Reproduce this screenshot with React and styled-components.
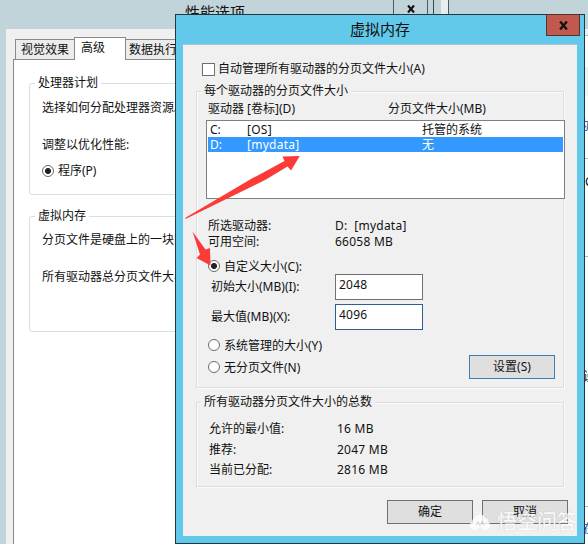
import React from "react";

import styled, { createGlobalStyle } from "styled-components";

const GlobalStyle = createGlobalStyle`
  * {
    box-sizing: border-box;
  }
  body {
    margin: 0;
    overflow: hidden;
    font-family: "Noto Sans", "Noto Sans CJK SC", sans-serif;
    font-size: 12px;
    color: #111;
  }
`;

const drives = [
  { letter: "C:", label: "[OS]", size: "托管的系统" },
  { letter: "D:", label: "[mydata]", size: "无", selected: true },
];

const totals = [
  { name: "允许的最小值:", value: "16 MB", height: 21 },
  { name: "推荐:", value: "2047 MB", height: 20 },
  { name: "当前已分配:", value: "2816 MB", height: 20 },
];

function CloseMark({ size = 8 }) {
  return (
    <svg width={size} height={size} viewBox="0 0 8 8">
      <path d="M1 0.5L7 7.5M7 0.5L1 7.5" stroke="#111" strokeWidth="2.1" />
    </svg>
  );
}

function PerformanceOptions() {
  return (
    <BackWindow>
      <BackTitle>
        <span>性能选项</span>
        <BackClose>
          <CloseMark />
        </BackClose>
      </BackTitle>
      <BackBody>
        <Tabs>
          <Tab $width={59}>视觉效果</Tab>
          <Tab $width={52} $active>
            高级
          </Tab>
          <Tab $width={80}>数据执行保护</Tab>
        </Tabs>
        <TabPage>
          <PageGroup $height={120}>
            <PageLegend>处理器计划</PageLegend>
            <PageText $top={9}>选择如何分配处理器资源。</PageText>
            <PageText $top={21}>调整以优化性能:</PageText>
            <PageText $top={10}>
              <Radio $checked />
              程序(P)
            </PageText>
          </PageGroup>
          <PageGroup $height={124}>
            <PageLegend>虚拟内存</PageLegend>
            <PageText $top={8}>分页文件是硬盘上的一块区域</PageText>
            <PageText $top={21}>所有驱动器总分页文件大小</PageText>
          </PageGroup>
        </TabPage>
      </BackBody>
    </BackWindow>
  );
}

function SystemProperties() {
  return (
    <SideWindow>
      <SideTitle />
      <SideBar $height={6} />
      <SideBar $height={24} $white $line />
      <SideBar $height={8} $white />
      <SideBar $height={29} />
      <SideBar $height={62} $white>
        <SideText $blue $top={22} $left={128}>
          的
        </SideText>
      </SideBar>
      <SideBar $height={98} $white $line>
        <SideText $top={15} $left={136}>
          C:
        </SideText>
      </SideBar>
      <SideBar $height={250} $white $line>
        <SideText $top={112} $left={134}>
          设
        </SideText>
      </SideBar>
      <SideBar $height={51} $white $line>
        <SideText $blue $top={14} $left={134}>
          在
        </SideText>
      </SideBar>
    </SideWindow>
  );
}

function VirtualMemoryDialog() {
  return (
    <Dialog>
      <DialogTitle>
        虚拟内存
        <DialogClose>
          <CloseMark size={9} />
        </DialogClose>
      </DialogTitle>
      <DialogBody>
        <AutoRow>
          <Checkbox />
          自动管理所有驱动器的分页文件大小(A)
        </AutoRow>

        <Group $height={305}>
          <Legend>每个驱动器的分页文件大小</Legend>
          <ListHead>
            <HeadCell>驱动器 [卷标](D)</HeadCell>
            <HeadCell>分页文件大小(MB)</HeadCell>
          </ListHead>
          <DriveList>
            {drives.map((drive) => (
              <DriveRow key={drive.letter} $selected={drive.selected}>
                <span>{drive.letter}</span>
                <Value>{drive.label}</Value>
                <span>{drive.size}</span>
              </DriveRow>
            ))}
          </DriveList>
          <DriveInfo>
            <InfoRow>
              <span>所选驱动器:</span>
              <Value>D:&nbsp; [mydata]</Value>
            </InfoRow>
            <InfoRow>
              <span>可用空间:</span>
              <Value>66058 MB</Value>
            </InfoRow>
          </DriveInfo>
          <RadioRow>
            <Radio $checked />
            自定义大小(C):
          </RadioRow>
          <FieldRow>
            <span>初始大小(MB)(I):</span>
            <Input defaultValue="2048" />
          </FieldRow>
          <FieldRow>
            <span>最大值(MB)(X):</span>
            <Input defaultValue="4096" $focused />
          </FieldRow>
          <SetRow>
            <div>
              <RadioRow $height={22}>
                <Radio />
                系统管理的大小(Y)
              </RadioRow>
              <RadioRow $height={22}>
                <Radio />
                无分页文件(N)
              </RadioRow>
            </div>
            <SetButton>设置(S)</SetButton>
          </SetRow>
        </Group>

        <Group $height={93} $top={6}>
          <Legend>所有驱动器分页文件大小的总数</Legend>
          <TotalList>
            {totals.map((total) => (
              <TotalRow key={total.name} $height={total.height}>
                <span>{total.name}</span>
                <Value>{total.value}</Value>
              </TotalRow>
            ))}
          </TotalList>
        </Group>

        <Footer>
          <Button>确定</Button>
          <Button>取消</Button>
        </Footer>
      </DialogBody>
    </Dialog>
  );
}

function Arrows() {
  return (
    <ArrowLayer width="130" height="120" viewBox="180 150 130 120">
      <path
        d="M185 218L251 179L284.5 161L282.5 156.5L299.8 156L291 170.5L287.5 166.5L266 179.5L186 218.8Z"
        fill="#fb3b38"
      />
      <path
        d="M192.5 231.5L205.5 249.5L210 248L210.5 265.5L196.5 258L200 254.5Z"
        fill="#fb3b38"
      />
    </ArrowLayer>
  );
}

function Watermark() {
  return (
    <Mark>
      <svg width="24" height="19" viewBox="0 0 24 19">
        <path
          d="M6 17C1 17 0 11 4 9C4 6 6 5 7 5C8 1 15 0 17 5C20 5 21 8 20 9C24 11 23 17 18 17C15 17 14 15 12 14C10 15 9 17 6 17Z"
          fill="#fff"
        />
        <path
          d="M8 12L10 9L12 12L14 9L16 12"
          fill="none"
          stroke="#d5d5d5"
          strokeWidth="1.3"
        />
      </svg>
      悟空问答
    </Mark>
  );
}

function App() {
  return (
    <Desktop>
      <GlobalStyle />
      <PerformanceOptions />
      <SystemProperties />
      <VirtualMemoryDialog />
      <Arrows />
      <Watermark />
    </Desktop>
  );
}

const Desktop = styled.main`
  position: relative;
  width: 588px;
  height: 544px;
  overflow: hidden;
  background: #c1d4da;
`;

/* windows behind the dialog */
const BackWindow = styled.section`
  position: absolute;
  left: 0;
  top: 0;
  width: 434px;
  height: 544px;
  border-right: 1px solid #3d484c;
`;

const BackTitle = styled.header`
  height: 29px;
  display: flex;
  justify-content: space-between;
  padding-left: 185px;
  padding-right: 5px;
  font-size: 15px;
  line-height: 25px;
`;

const BackClose = styled.div`
  width: 35px;
  height: 20px;
  padding-top: 5px;
  display: flex;
  justify-content: center;
  border: 1px solid #4d5a5f;
  border-top: 0;
`;

const BackBody = styled.div`
  height: 515px;
  margin-left: 6px;
  padding: 8px 0 0 7px;
  background: #f0f0f0;
`;

const Tabs = styled.div`
  height: 22px;
  display: flex;
  align-items: flex-end;
  padding-left: 2px;
`;

const Tab = styled.div`
  width: ${(props) => props.$width}px;
  height: ${(props) => (props.$active ? 23 : 20)}px;
  margin-bottom: ${(props) => (props.$active ? -1 : 0)}px;
  padding-left: ${(props) => (props.$active ? 6 : 5)}px;
  line-height: 20px;
  white-space: nowrap;
  overflow: hidden;
  border: 1px solid #8a8a8a;
  border-bottom: 0;
  border-left-width: ${(props) => (props.$width === 80 ? 0 : 1)}px;
  border-right-width: ${(props) => (props.$width === 59 ? 0 : 1)}px;
  background: ${(props) => (props.$active ? "#fff" : "#ececec")};
  z-index: ${(props) => (props.$active ? 1 : 0)};

  &:last-child {
    padding-left: 3px;
  }
`;

const TabPage = styled.div`
  height: 490px;
  padding: 15px 0 0 15px;
  border: 1px solid #8a8a8a;
  background: #fff;
`;

const PageGroup = styled.fieldset`
  height: ${(props) => props.$height}px;
  margin: 0 0 13px;
  padding: 0 0 0 12px;
  border: 1px solid #dcdfe0;
  border-radius: 3px;
`;

const PageLegend = styled.legend`
  height: 16px;
  margin-left: -7px;
  padding: 0 3px;
  line-height: 16px;
`;

const PageText = styled.div`
  height: 16px;
  margin-top: ${(props) => props.$top}px;
  display: flex;
  align-items: center;
  gap: 4px;
  line-height: 16px;
  white-space: nowrap;
`;

const SideWindow = styled.section`
  position: absolute;
  left: 448px;
  top: 0;
  width: 140px;
  height: 544px;
  border-left: 1px solid #4d5a5f;
  box-shadow: -7px 0 0 #e8eef0;
`;

const SideTitle = styled.div`
  height: 29px;
`;

const SideBar = styled.div`
  height: ${(props) => props.$height}px;
  overflow: hidden;
  background: ${(props) => (props.$white ? "#fff" : "#eff3f3")};
  border-top: ${(props) => (props.$line ? "1px solid #b4b8ba" : "0")};
`;

const SideText = styled.div`
  margin-top: ${(props) => props.$top}px;
  margin-left: ${(props) => props.$left}px;
  line-height: 16px;
  color: ${(props) => (props.$blue ? "#1646a8" : "#111")};
`;

/* the dialog */
const Dialog = styled.section`
  position: absolute;
  left: 175px;
  top: 14px;
  width: 410px;
  height: 530px;
  padding: 0 7px 7px;
  border: 1px solid #24373f;
  background: #63c9ea;
`;

const DialogTitle = styled.header`
  position: relative;
  height: 29px;
  font-size: 15px;
  line-height: 29px;
  text-align: center;
`;

const DialogClose = styled.div`
  position: absolute;
  right: -3px;
  top: -1px;
  width: 34px;
  height: 22px;
  display: flex;
  align-items: center;
  justify-content: center;
  border: 1px solid #56322f;
  background: #c2594e;
`;

const DialogBody = styled.div`
  height: 492px;
  padding: 16px 13px 0 13px;
  border-top: 1px solid #a9c4ce;
  background: #f0f0f0;
`;

const AutoRow = styled.div`
  height: 16px;
  margin-bottom: 6px;
  padding-left: 6px;
  display: flex;
  align-items: center;
  gap: 3px;
  line-height: 16px;
`;

const Checkbox = styled.span`
  width: 13px;
  height: 13px;
  border: 1px solid #6e6e6e;
  background: #fff;
`;

const Radio = styled.span`
  width: 12px;
  height: 12px;
  flex: none;
  border: 1px solid #6a6a6a;
  border-radius: 50%;
  background: ${(props) =>
    props.$checked
      ? "radial-gradient(circle, #222 0 2.6px, #fff 3.4px)"
      : "#fff"};
`;

const Group = styled.fieldset`
  height: ${(props) => props.$height}px;
  min-width: 0;
  margin: ${(props) => props.$top || 0}px 0 0;
  padding: 0;
  border: 1px solid #dcdcdc;
  box-shadow: inset 1px 1px #fbfbfb, 1px 1px #fbfbfb;
`;

const Legend = styled.legend`
  height: 16px;
  margin-left: 4px;
  padding: 0 3px;
  line-height: 16px;
  background: #f0f0f0;
`;

const ListHead = styled.div`
  height: 21px;
  display: grid;
  grid-template-columns: 180px 1fr;
  padding-left: 11px;
`;

const HeadCell = styled.span`
  line-height: 20px;
`;

const DriveList = styled.div`
  height: 79px;
  margin-left: 9px;
  margin-right: -2px;
  padding: 1px;
  border: 1px solid #7c8084;
  background: #fff;
`;

const DriveRow = styled.div`
  height: 15px;
  display: grid;
  grid-template-columns: 37px 175px 1fr;
  padding-left: 2px;
  line-height: 15px;
  color: ${(props) => (props.$selected ? "#fff" : "#111")};
  background: ${(props) => (props.$selected ? "#3399ff" : "#fff")};
`;

const DriveInfo = styled.div`
  padding: 19px 0 8px 11px;
`;

const InfoRow = styled.div`
  height: 16px;
  display: grid;
  grid-template-columns: 127px 1fr;
  line-height: 16px;
`;

const Value = styled.span`
  letter-spacing: 0.25px;
`;

const RadioRow = styled.div`
  height: ${(props) => props.$height || 16}px;
  display: flex;
  align-items: center;
  gap: 4px;
  padding-left: 11px;
`;

const FieldRow = styled.div`
  height: 26px;
  margin-bottom: 4px;
  display: grid;
  grid-template-columns: 124px 88px;
  padding-left: 14px;
  line-height: 26px;
`;

const Input = styled.input`
  width: 88px;
  height: 26px;
  padding: 0 3px 5px;
  border: 1px solid ${(props) => (props.$focused ? "#2f5f92" : "#707070")};
  border-radius: 0;
  outline: 0;
  background: #fff;
  font: inherit;
  color: inherit;
  letter-spacing: 0.2px;
`;

const SetRow = styled.div`
  display: flex;
  align-items: flex-end;
  justify-content: space-between;
  padding-right: 8px;
`;

const Button = styled.button`
  width: 86px;
  height: 24px;
  padding: 0;
  border: 1px solid #707070;
  border-radius: 0;
  background: #dfdfdf;
  font: inherit;
  line-height: 20px;
  color: inherit;
`;

const SetButton = styled(Button)`
  margin-bottom: -1px;
  border-color: #3c7fb1;
`;

const TotalList = styled.div`
  padding: 9px 0 0 12px;
`;

const TotalRow = styled.div`
  height: ${(props) => props.$height}px;
  display: grid;
  grid-template-columns: 128px 1fr;
  line-height: 20px;
`;

const Footer = styled.footer`
  margin-top: 13px;
  display: flex;
  justify-content: flex-end;
  gap: 9px;
  margin-right: -4px;
`;

const ArrowLayer = styled.svg`
  position: absolute;
  left: 180px;
  top: 150px;
`;

const Mark = styled.div`
  position: absolute;
  left: 468px;
  top: 510px;
  display: flex;
  align-items: center;
  gap: 5px;
  font-size: 20px;
  font-weight: 500;
  line-height: 24px;
  color: #fff;
  opacity: 0.8;
  text-shadow: 0 0 1px #aaa;
`;

export default App;
